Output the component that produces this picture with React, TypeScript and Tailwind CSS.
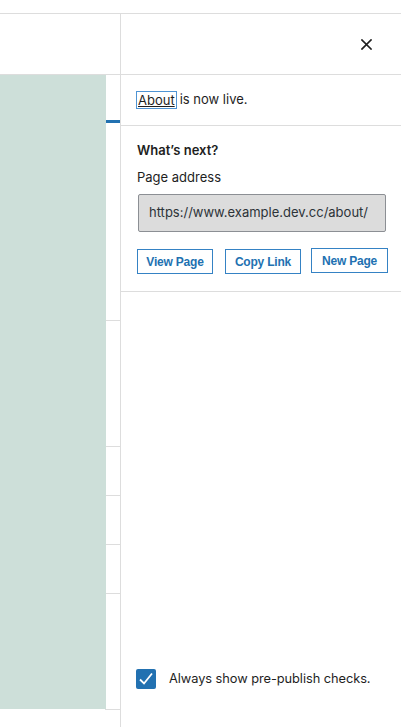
import React from "react";

export default function App() {
  const font = { fontFamily: "Inter, 'Noto Sans', sans-serif" };
  return (
    <div className="w-[401px] h-[727px] bg-white text-[#1e1e1e] overflow-hidden" style={font}>
      <div className="h-[14px] border-b border-[#dddddd]" />
      <div className="flex h-[713px]">
        {/* left column */}
        <div className="w-[120px] flex flex-col">
          <div className="h-[61px] border-b border-[#dddddd]" />
          <div className="flex">
            <div className="w-[106px] h-[634px] bg-[#cddfd9]" />
            <div className="flex-1 flex flex-col">
              <div className="h-[45px]" />
              <div className="h-[3px] bg-[#2271b1]" />
              <div className="h-[198px] border-b border-[#dddddd]" />
              <div className="h-[126px] border-b border-[#dddddd]" />
              <div className="h-[49px] border-b border-[#dddddd]" />
              <div className="h-[49px] border-b border-[#dddddd]" />
              <div className="h-[49px] border-b border-[#dddddd]" />
              <div className="h-[115px]" />
            </div>
          </div>
          <div className="h-px ml-[105px] bg-[#dddddd]" />
        </div>
        {/* right column */}
        <div className="w-[281px] border-l border-[#dddddd] flex flex-col">
          <div className="h-[61px] border-b border-[#dddddd] flex items-center justify-end pr-[29px]">
            <svg width="11" height="11" viewBox="0 0 11 11" className="mt-px">
              <path d="M1 1 L10 10 M10 1 L1 10" stroke="#1e1e1e" strokeWidth="1.7" strokeLinecap="square" />
            </svg>
          </div>
          <div className="h-[51px] border-b border-[#dddddd] flex items-center pl-[15px] text-[13px]">
            <span className="border border-[#4f94d4] underline px-px leading-[16px]">About</span>
            <span className="ml-[3px]">is now live.</span>
          </div>
          <div className="h-[166px] border-b border-[#dddddd] pl-4 pt-4">
            <div className="text-[13px] font-semibold leading-4">What’s next?</div>
            <div className="text-[13px] leading-4 mt-[11px]">Page address</div>
            <div className="mt-[9px] ml-px w-[248px] h-[38px] bg-[#dcdcdc] border border-[#8c8f94] rounded-[2px] flex items-center pl-[10px] text-[13px] text-[#2c3338]">
              https://www.example.dev.cc/about/
            </div>
            <div className="flex mt-[17px]" style={{ fontFamily: "'Liberation Sans', Arial, sans-serif" }}>
              <div className="shrink-0 w-[76px] h-[25px] border border-[#3582c4] text-[#2271b1] text-[12px] font-bold flex items-center justify-center tracking-[-0.2px]">View Page</div>
              <div className="shrink-0 w-[76px] h-[25px] ml-[12px] border border-[#3582c4] text-[#2271b1] text-[12px] font-bold flex items-center justify-center tracking-[-0.2px]">Copy Link</div>
              <div className="shrink-0 w-[77px] h-[25px] ml-[10px] -mt-px border border-[#3582c4] text-[#2271b1] text-[12px] font-bold flex items-center justify-center tracking-[-0.2px]">New Page</div>
            </div>
          </div>
          <div className="flex-1" />
          <div className="h-[58px] pl-[15px] flex items-start">
            <div className="flex items-center">
              <div className="w-[20px] h-[20px] bg-[#2271b1] rounded-[2px] flex items-center justify-center">
                <svg width="18" height="18" viewBox="0 0 18 18">
                  <path d="M3 9.5 L7 13.5 L15 3.5" stroke="white" strokeWidth="1.8" fill="none" />
                </svg>
              </div>
              <span className="ml-[13px] text-[12.8px] tracking-[-0.05px]">Always show pre-publish checks.</span>
            </div>
          </div>
        </div>
      </div>
    </div>
  );
}
